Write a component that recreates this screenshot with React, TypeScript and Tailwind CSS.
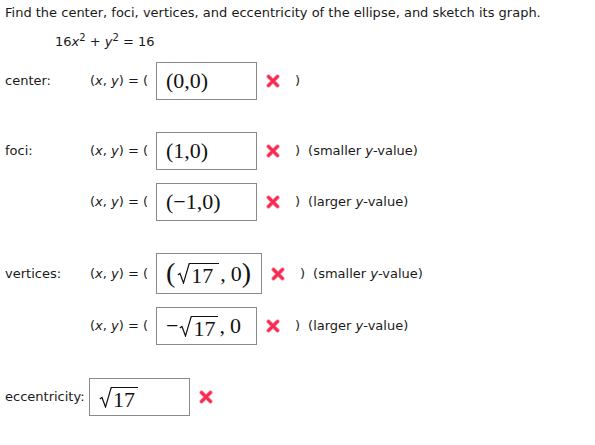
const SANS = "font-['Verdana','DejaVu_Sans',sans-serif]";

function WrongMark() {
  return (
    <svg width="14" height="14" viewBox="0 0 14 14" className="shrink-0">
      <path d="M2.5 2.5 L11.5 11.5 M11.5 2.5 L2.5 11.5" stroke="#ff8da0" strokeWidth="4.2" strokeLinecap="round" />
      <path d="M2.5 2.5 L11.5 11.5 M11.5 2.5 L2.5 11.5" stroke="#f52c52" strokeWidth="2.8" strokeLinecap="round" />
    </svg>
  );
}

function Sqrt({ children, tail = 'pr-[3px]' }: { children: React.ReactNode; tail?: string }) {
  return (
    <span className="inline-flex items-stretch">
      <svg width="13" height="21" viewBox="0 0 13 21" className="shrink-0">
        <path d="M0.8 12 L3 10.5 L6.5 20 L12.2 0.6 L13 0.6" stroke="#111" strokeWidth="1.2" fill="none" />
      </svg>
      <span className={`border-t-[1.2px] border-[#111] pt-[3px] leading-[17px] pl-[1px] ${tail}`}>{children}</span>
    </span>
  );
}

function MathBox({ children, w = 'w-[101px]', h = 'h-[38px]' }: { children: React.ReactNode; w?: string; h?: string }) {
  return (
    <div className={`${w} ${h} border border-[#8a8a8a] flex items-center pl-[9px] font-['Liberation_Serif',serif] text-[22px] text-[#111] shrink-0`}>
      {children}
    </div>
  );
}

function XY() {
  return (
    <span className="w-[66px] shrink-0">
      (<i>x</i>, <i>y</i>) = (
    </span>
  );
}

function Row({ label, box, note, className = '' }: { label?: string; box: React.ReactNode; note?: string; className?: string }) {
  return (
    <div className={`flex items-center ${className}`}>
      <span className="w-[85px] shrink-0">{label}</span>
      <XY />
      {box}
      <span className="ml-[9px]"><WrongMark /></span>
      <span className="ml-[15px]">)</span>
      {note && (
        <span className="ml-[8px]">
          ({note} <i>y</i>-value)
        </span>
      )}
    </div>
  );
}

export default function App() {
  return (
    <div className={`w-[595px] h-[445px] bg-white text-[13px] leading-[16px] text-[#1a1a1a] ${SANS} pl-[5px] pt-[5px]`}>
      <p>Find the center, foci, vertices, and eccentricity of the ellipse, and sketch its graph.</p>
      <p className="pl-[50px] mt-[13px]">
        16<i>x</i>
        <sup className="text-[10px]">2</sup> + <i>y</i>
        <sup className="text-[10px]">2</sup> = 16
      </p>

      <Row
        className="mt-[12px]"
        label="center:"
        box={<MathBox><span>(0,0)</span></MathBox>}
      />

      <Row
        className="mt-[32px]"
        label="foci:"
        note="smaller"
        box={<MathBox><span>(1,0)</span></MathBox>}
      />
      <Row
        className="mt-[13px]"
        note="larger"
        box={<MathBox><span>(−1,0)</span></MathBox>}
      />

      <Row
        className="mt-[32px]"
        label="vertices:"
        note="smaller"
        box={
          <MathBox w="w-[106px]" h="h-[41px]">
            <span className="flex items-center">
              <span className="text-[28px] leading-none mb-[2px] mr-[2px]">(</span>
              <Sqrt tail="pr-[6px]">17</Sqrt>
              <span className="ml-[1px]">,</span>
              <span className="ml-[5px]">0</span>
              <span className="text-[28px] leading-none mb-[2px]">)</span>
            </span>
          </MathBox>
        }
      />
      <Row
        className="mt-[13px]"
        note="larger"
        box={
          <MathBox>
            <span className="flex items-center">
              <span className="mr-[1px]">−</span>
              <Sqrt>17</Sqrt>
              <span className="ml-[1px]">,</span>
              <span className="ml-[5px]">0</span>
            </span>
          </MathBox>
        }
      />

      <div className="flex items-center mt-[33px]">
        <span className="w-[84px] shrink-0">eccentricity:</span>
        <MathBox>
          <span className="flex items-center">
            <Sqrt>17</Sqrt>
          </span>
        </MathBox>
        <span className="ml-[9px]"><WrongMark /></span>
      </div>
    </div>
  );
}
